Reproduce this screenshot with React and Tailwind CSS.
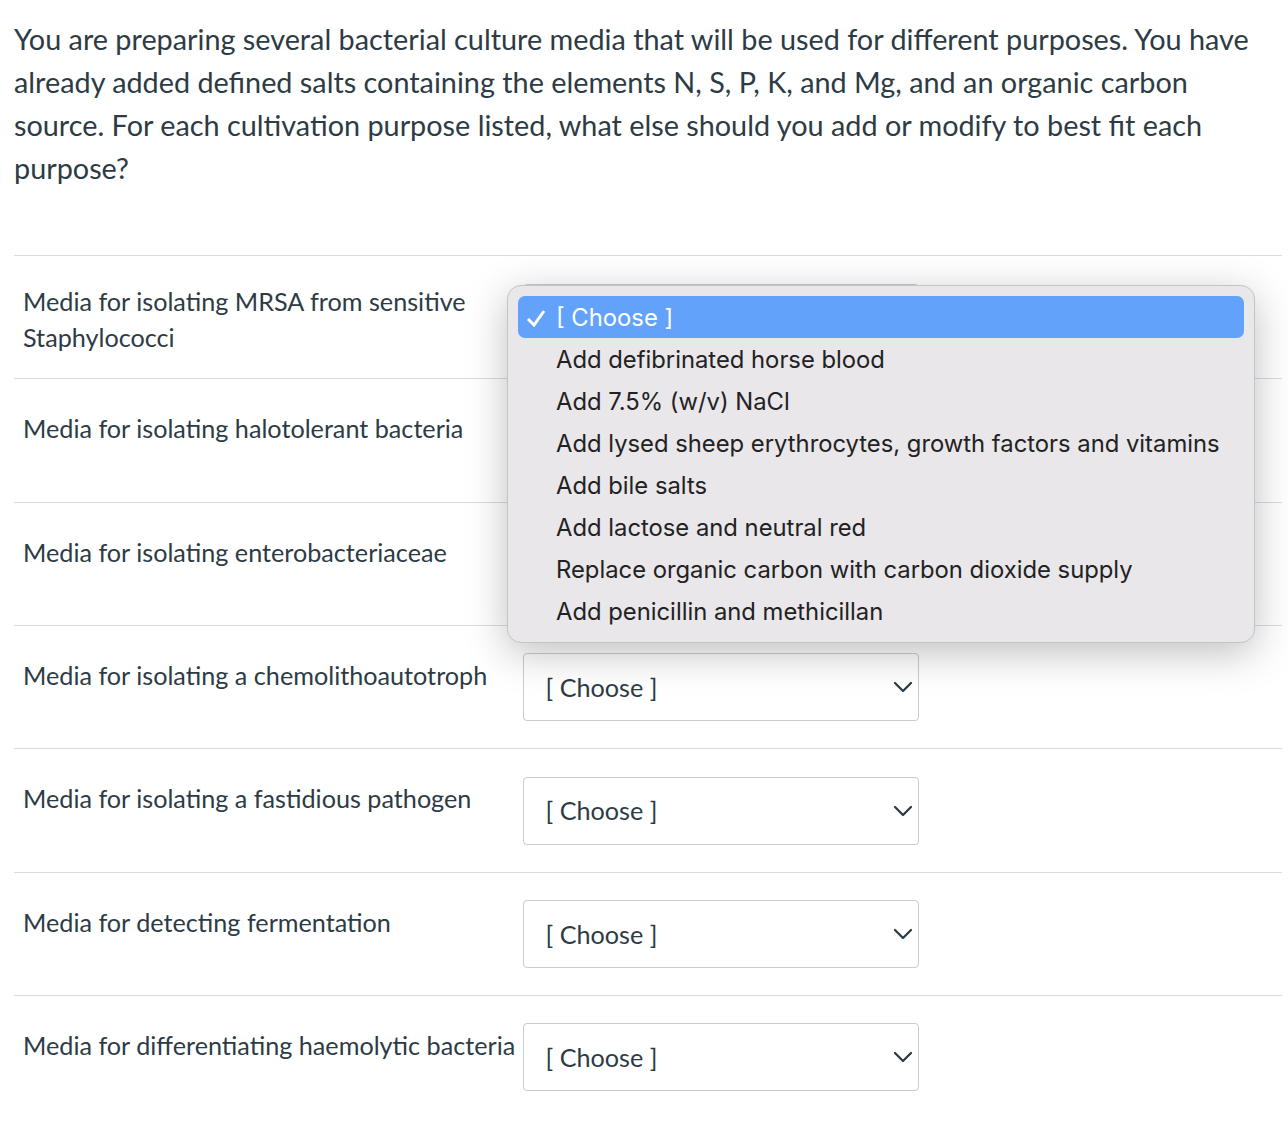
import React from "react";
import { ChevronDown } from "lucide-react";

const rows = [
  "Media for isolating MRSA from sensitive Staphylococci",
  "Media for isolating halotolerant bacteria",
  "Media for isolating enterobacteriaceae",
  "Media for isolating a chemolithoautotroph",
  "Media for isolating a fastidious pathogen",
  "Media for detecting fermentation",
  "Media for differentiating haemolytic bacteria",
];

const options = [
  "Add defibrinated horse blood",
  "Add 7.5% (w/v) NaCl",
  "Add lysed sheep erythrocytes, growth factors and vitamins",
  "Add bile salts",
  "Add lactose and neutral red",
  "Replace organic carbon with carbon dioxide supply",
  "Add penicillin and methicillan",
];

function Row({ label, first }) {
  return (
    <div className="flex h-[123.33px] border-t border-[#d9dde0] pl-[9px]">
      <div className={first ? "w-[500px] pt-[27px] text-[25.2px] leading-[36px]" : "w-[500px] pt-[31px] text-[25.2px] leading-[36px]"}>
        {label}
      </div>
      <div className="mt-[27.5px] flex h-[68px] w-[396px] items-center justify-between rounded-[4px] border border-[#c7cdd1] bg-white pl-[21.5px] text-[25.2px]">
        <span className="pt-[1px]">[ Choose ]</span>
        <ChevronDown size={32} strokeWidth={1.7} className="-mr-[1px] text-[#2d3b45]" />
      </div>
    </div>
  );
}

export default function App() {
  return (
    <div className="relative h-[1130px] w-[1288px] overflow-hidden bg-white pl-[14px] pr-[6px] pt-[17.5px] font-['Lato',sans-serif] text-[#2d3b45]">
      <p className="h-[237.5px] text-[28.8px] leading-[43.2px]">
        You are preparing several bacterial culture media that will be used for different purposes. You have
        already added defined salts containing the elements N, S, P, K, and Mg, and an organic carbon source.
        For each cultivation purpose listed, what else should you add or modify to best fit each purpose?
      </p>
      {rows.map((r, i) => (
        <Row key={r} label={r} first={i === 0} />
      ))}
      <div className="absolute left-[507px] top-[285px] h-[358px] w-[748px] rounded-[14px] border border-[#c4c3c5] bg-[#e9e7ea] p-[10px] font-['Inter',sans-serif] text-[23.8px] whitespace-nowrap text-[#222] shadow-[0_10px_40px_rgba(0,0,0,0.25)]">
        <div className="flex h-[42px] items-center rounded-[7px] bg-[#62a2fb] pl-[8px] text-white">
          <svg width="20" height="18" viewBox="0 0 20 18" fill="none" stroke="currentColor" strokeWidth="3" className="mr-[10px] mt-[2px]">
            <polyline points="2,10 8,16 18,2" />
          </svg>
          <span className="pt-[1px]">[ Choose ]</span>
        </div>
        {options.map((o) => (
          <div key={o} className="flex h-[42px] items-center pl-[38px] pt-[1px]">
            {o}
          </div>
        ))}
      </div>
    </div>
  );
}
